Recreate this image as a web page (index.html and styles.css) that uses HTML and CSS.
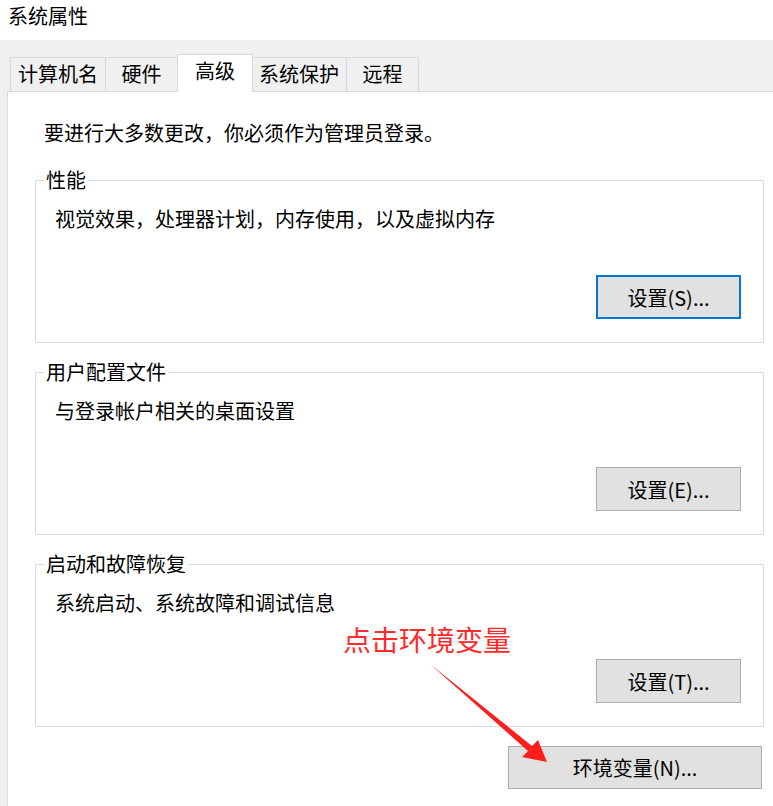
FILE: index.html
```html
<!DOCTYPE html>
<html lang="zh-CN">
<head>
    <meta charset="UTF-8">
    <meta name="viewport" content="width=device-width, initial-scale=1.0">
    <title>系统属性</title>
    <link rel="stylesheet" href="styles.css">
</head>
<body>

    <div class="titlebar">系统属性</div>

    <div class="dialog">
        <!-- Tabs -->
        <div class="tabs">
            <div class="tab">计算机名</div>
            <div class="tab">硬件</div>
            <div class="tab active">高级</div>
            <div class="tab">系统保护</div>
            <div class="tab">远程</div>
        </div>

        <!-- Advanced page -->
        <div class="panel">
            <p class="intro">要进行大多数更改，你必须作为管理员登录。</p>

            <fieldset class="group">
                <legend>性能</legend>
                <p>视觉效果，处理器计划，内存使用，以及虚拟内存</p>
                <div class="button-row">
                    <button class="focused">设置(S)...</button>
                </div>
            </fieldset>

            <fieldset class="group">
                <legend>用户配置文件</legend>
                <p>与登录帐户相关的桌面设置</p>
                <div class="button-row">
                    <button>设置(E)...</button>
                </div>
            </fieldset>

            <fieldset class="group">
                <legend>启动和故障恢复</legend>
                <p>系统启动、系统故障和调试信息</p>
                <div class="button-row">
                    <button>设置(T)...</button>
                </div>
            </fieldset>

            <div class="env-row">
                <button class="env-button">环境变量(N)...</button>
            </div>
        </div>
    </div>

    <!-- Red annotation drawn over the dialog -->
    <div class="note">点击环境变量</div>
    <svg class="arrow" width="773" height="806" viewBox="0 0 773 806">
        <polygon points="430,664 532,746 538,740 547,762 522,757 528,751" fill="#ff1e1e"/>
    </svg>

</body>
</html>
```

FILE: styles.css
```css
html, body {
    margin: 0;
    padding: 0;
}
body {
    width: 773px;
    height: 806px;
    overflow: hidden;
    position: relative;
    background-color: white;
    color: #000;
    font-family: "Noto Sans CJK SC", "Microsoft YaHei", sans-serif;
    font-size: 20px;
    line-height: 26px;
}
.titlebar {
    height: 37px;
    padding: 3px 0 0 8px;
}
.dialog {
    background-color: #f0f0f0;
    padding: 14px 0 0 7px;
    height: 752px;
}
.tabs {
    display: flex;
    align-items: flex-end;
    margin-left: 3px;
}
.tab {
    min-width: 73px;
    height: 34px;
    padding: 3px 7px 0;
    border: 1px solid #d9d9d9;
    border-bottom: none;
    margin-left: -1px;
    text-align: center;
    box-sizing: border-box;
    background-color: #f0f0f0;
}
.tab:first-child {
    margin-left: 0;
}
.tab.active {
    position: relative;
    z-index: 1;
    min-width: 76px;
    height: 38px;
    margin: 0 -1px -1px -1px;
    background-color: white;
}
.panel {
    background-color: white;
    border: 1px solid #d9d9d9;
    border-right: none;
    padding: 28px 9px 40px 27px;
}
.intro {
    margin: 0 0 24px 9px;
}
.group {
    margin: 0 0 19px 0;
    padding: 0 22px 23px 19px;
    border: 1px solid #dcdcdc;
}
.group legend {
    margin-left: -11px;
    padding: 0 2px;
    line-height: 20px;
}
.group p {
    margin: 16px 0 0 0;
}
.button-row {
    display: flex;
    justify-content: flex-end;
    margin-top: 43px;
}
button {
    width: 145px;
    height: 44px;
    padding: 0;
    font-family: inherit;
    font-size: 20px;
    color: #000;
    background-color: #e1e1e1;
    border: 1px solid #adadad;
}
button.focused {
    border: 2px solid #0078d7;
}
.env-row {
    display: flex;
    justify-content: flex-end;
    margin-top: 18px;
    padding-right: 2px;
}
.env-button {
    width: 254px;
    height: 43px;
}
.note {
    position: absolute;
    left: 343px;
    top: 621px;
    font-size: 28px;
    line-height: 36px;
    color: #ff2a2a;
}
.arrow {
    position: absolute;
    left: 0;
    top: 0;
    pointer-events: none;
}
```
